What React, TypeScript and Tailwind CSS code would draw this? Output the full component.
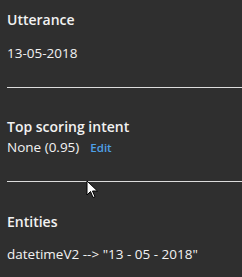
import React from 'react'

export default function App() {
  return (
    <div className="relative h-[277px] w-[242px] overflow-hidden bg-[#2f2f2f] pl-[7px] font-['Segoe_UI','Open_Sans',sans-serif] text-[#f2f2f2]">
      <div className="pt-[10px]">
        <h2 className="text-[14px] leading-[19px] font-semibold">Utterance</h2>
        <p className="mt-[15px] text-[13.5px] leading-[19px]">13-05-2018</p>
      </div>
      <div className="mt-[24px] h-px bg-[#dcdcdc]" />
      <div className="pt-[29px]">
        <h2 className="text-[14px] leading-[19px] font-semibold">Top scoring intent</h2>
        <p className="mt-[2px] flex items-baseline text-[13.5px] leading-[19px]">
          None (0.95)
          <span className="ml-[11px] cursor-pointer text-[11.5px] font-semibold text-[#4ea1e8]">Edit</span>
        </p>
      </div>
      <div className="mt-[24px] h-px bg-[#dcdcdc]" />
      <div className="pt-[30px]">
        <h2 className="text-[14px] leading-[19px] font-semibold">Entities</h2>
        <p className="mt-[14px] text-[13.5px] leading-[19px]">datetimeV2 --&gt; "13 - 05 - 2018"</p>
      </div>
      <svg
        className="absolute left-[86px] top-[180px]"
        width="13"
        height="19"
        viewBox="0 0 13 19"
      >
        <path
          d="M1 1 L1 15 L4.5 11.5 L7 17.5 L9 16.7 L6.5 11 L11.5 11 Z"
          fill="#fff"
          stroke="#000"
          strokeWidth="1"
        />
      </svg>
    </div>
  )
}
